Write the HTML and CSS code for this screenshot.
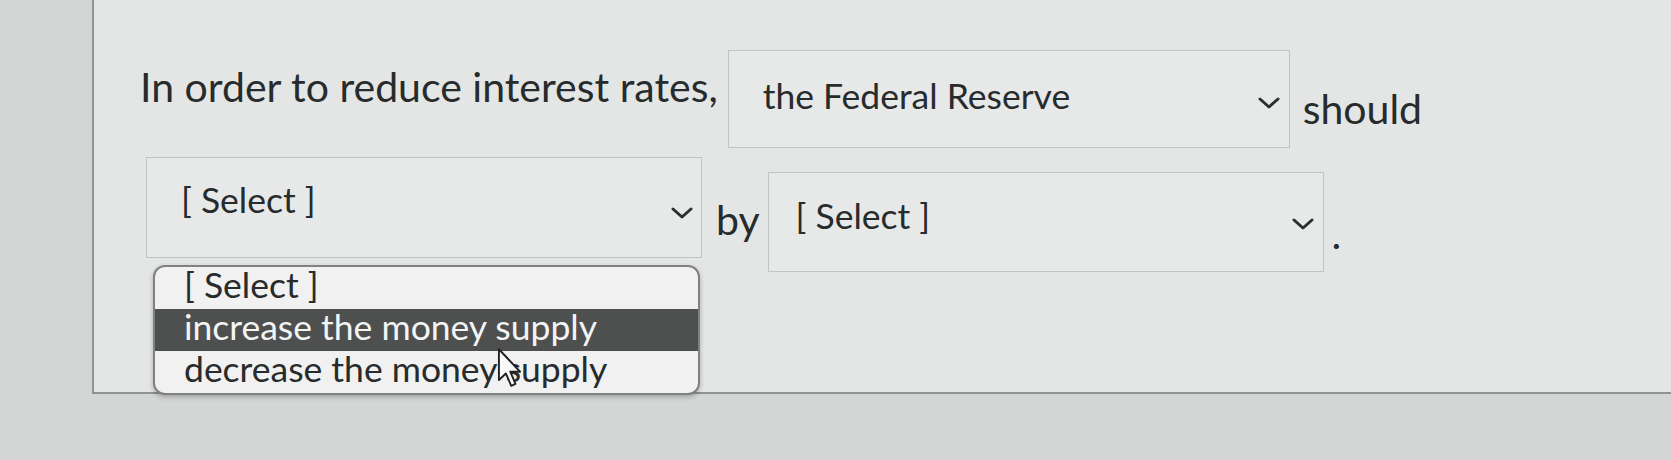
FILE: index.html
```html
<!DOCTYPE html>
<html lang="en">
<head>
<meta charset="utf-8">
<title>Quiz question</title>
<link rel="stylesheet" href="styles.css">
</head>
<body>
<div class="page">
  <div class="card">
    <div class="question">
      <div class="row row1">
        <span class="txt t-lead">In order to reduce interest rates,</span>
        <div class="sel sel1">
          <span class="sel-val">the Federal Reserve</span>
          <svg class="chev" viewBox="0 0 22 12" width="22" height="12"><polyline points="2,2 11,10 20,2" fill="none" stroke="#2b2f30" stroke-width="3" stroke-linecap="round" stroke-linejoin="round"/></svg>
        </div>
        <span class="txt t-should">should</span>
      </div>
      <div class="row row2">
        <div class="sel-wrap">
          <div class="sel sel2">
            <span class="sel-val">[ Select ]</span>
            <svg class="chev" viewBox="0 0 22 12" width="22" height="12"><polyline points="2,2 11,10 20,2" fill="none" stroke="#2b2f30" stroke-width="3" stroke-linecap="round" stroke-linejoin="round"/></svg>
          </div>
          <ul class="menu">
            <li class="opt">[ Select ]</li>
            <li class="opt opt-active">increase the money supply</li>
            <li class="opt">decrease the money supply</li>
          </ul>
        </div>
        <span class="txt t-by">by</span>
        <div class="sel sel3">
          <span class="sel-val">[ Select ]</span>
          <svg class="chev" viewBox="0 0 22 12" width="22" height="12"><polyline points="2,2 11,10 20,2" fill="none" stroke="#2b2f30" stroke-width="3" stroke-linecap="round" stroke-linejoin="round"/></svg>
        </div>
        <span class="txt t-dot">.</span>
      </div>
    </div>
  </div>
  <svg class="cursor" viewBox="0 0 13 21" width="25" height="41"><path d="M1,1 L1,17 L4.6,13.6 L7.4,20 L9.6,19 L6.9,12.7 L12,12.7 Z" fill="#fafafa" stroke="#222" stroke-width="1" stroke-linejoin="round"/></svg>
</div>
</body>
</html>
```

FILE: styles.css
```css
html, body {
  margin: 0;
  padding: 0;
}
body {
  background: #d4d6d5;
  font-family: "Lato", "Open Sans", "Liberation Sans", sans-serif;
  color: #272b2c;
}
.page {
  position: relative;
  width: 1671px;
  height: 460px;
  overflow: hidden;
  background: #d4d6d5;
}
.card {
  margin-left: 92px;
  height: 394px;
  box-sizing: border-box;
  background: #e3e6e5;
  border-left: 2px solid #8f9392;
  border-bottom: 2px solid #8f9392;
  padding-left: 46px;
}
.question {
  font-size: 41px;
  line-height: 1.2;
}
.row {
  display: flex;
  align-items: flex-start;
}
.row1 {
  padding-top: 50px;
}
.row2 {
  margin-top: 9px;
}
.txt {
  display: block;
  white-space: nowrap;
}
.t-lead {
  margin-top: 12px;
}
.t-should {
  margin-top: 34px;
  margin-left: 13px;
}
.t-by {
  margin-top: 38px;
  margin-left: 14px;
}
.t-dot {
  margin-top: 52px;
  margin-left: 8px;
}
.sel {
  display: flex;
  justify-content: space-between;
  align-items: flex-start;
  box-sizing: border-box;
  border: 1px solid #c0c4c3;
  background: #e6e9e8;
  white-space: nowrap;
  font-size: 35.5px;
  line-height: 1.2;
}
.chev {
  display: block;
  flex: none;
}
.sel1 {
  margin-left: 10px;
  width: 562px;
  height: 98px;
  padding: 24px 9px 0 34px;
}
.sel1 .chev {
  margin-top: 22px;
}
.sel-wrap {
  position: relative;
  margin-left: 6px;
}
.sel2 {
  width: 556px;
  height: 101px;
  padding: 21px 8px 0 34px;
}
.sel2 .chev {
  margin-top: 28px;
}
.sel3 {
  margin-left: 8px;
  margin-top: 15px;
  width: 556px;
  height: 100px;
  padding: 22px 9px 0 27px;
}
.sel3 .chev {
  margin-top: 23px;
}
.menu {
  position: absolute;
  left: 7px;
  top: 108px;
  width: 547px;
  margin: 0;
  padding: 0;
  list-style: none;
  box-sizing: border-box;
  background: #f0f1f0;
  border: 2px solid #7f8281;
  border-radius: 12px;
  box-shadow: 0 2px 5px rgba(0, 0, 0, 0.25);
  font-size: 35.5px;
}
.opt {
  line-height: 36px;
  padding: 0 0 6px 29px;
  white-space: nowrap;
  color: #272b2c;
}
.opt-active {
  background: #4e5050;
  color: #f3f4f4;
}
.cursor {
  position: absolute;
  left: 497px;
  top: 347px;
}
```
